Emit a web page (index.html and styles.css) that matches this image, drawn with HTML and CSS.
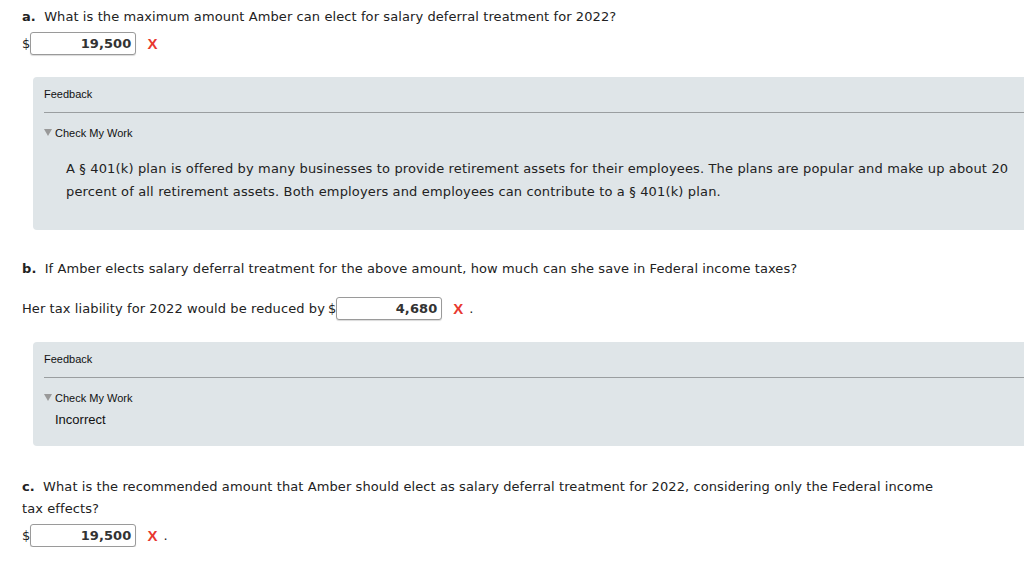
FILE: index.html
```html
<!DOCTYPE html>
<html>
<head>
<meta charset="utf-8">
<link rel="stylesheet" href="styles.css">
</head>
<body>
<div class="page">
  <p class="q"><b class="lbl">a.</b> What is the maximum amount Amber can elect for salary deferral treatment for 2022?</p>
  <div class="row row-a"><span class="cur">$</span><span class="inp">19,500</span><span class="x">X</span></div>
  <div class="fb">
    <div class="fb-title">Feedback</div>
    <div class="fb-rule"></div>
    <div class="cmw"><span class="tri"></span>Check My Work</div>
    <p class="fb-text">A § 401(k) plan is offered by many businesses to provide retirement assets for their employees. The plans are popular and make up about 20<br>percent of all retirement assets. Both employers and employees can contribute to a § 401(k) plan.</p>
  </div>

  <p class="q q-b"><b class="lbl">b.</b> If Amber elects salary deferral treatment for the above amount, how much can she save in Federal income taxes?</p>
  <div class="row row-b"><span class="lead">Her tax liability for 2022 would be reduced by</span><span class="cur">$</span><span class="inp">4,680</span><span class="x">X</span><span class="dot">.</span></div>
  <div class="fb fb-2">
    <div class="fb-title">Feedback</div>
    <div class="fb-rule"></div>
    <div class="cmw"><span class="tri"></span>Check My Work</div>
    <div class="incorrect">Incorrect</div>
  </div>

  <p class="q q-c"><b class="lbl">c.</b> What is the recommended amount that Amber should elect as salary deferral treatment for 2022, considering only the Federal income<br>tax effects?</p>
  <div class="row row-c"><span class="cur">$</span><span class="inp">19,500</span><span class="x">X</span><span class="dot">.</span></div>
</div>
</body>
</html>
```
FILE: styles.css
```css
html, body {
  margin: 0;
  padding: 0;
  overflow: hidden;
  background: #fff;
}
.page {
  padding: 6px 0 0 22px;
  font-family: Verdana, "DejaVu Sans", sans-serif;
  font-size: 13px;
  letter-spacing: 0.09px;
  color: #222;
}
.q {
  margin: 0;
  line-height: 22px;
  white-space: nowrap;
}
.lbl {
  font-weight: bold;
  margin-right: 4px;
}
.row {
  margin-top: 5px;
  height: 23px;
  display: flex;
  align-items: center;
  white-space: nowrap;
}
.row-a {
  margin-top: 4px;
}
.row-c {
  margin-top: 4px;
}
.lead {
  margin-right: 3px;
}
.inp {
  box-sizing: border-box;
  width: 106px;
  height: 23px;
  border: 1px solid #9a9a9a;
  border-radius: 3px;
  box-shadow: 0 1px 1px rgba(0,0,0,0.15);
  text-align: right;
  padding-right: 4px;
  font-weight: bold;
  color: #333;
  line-height: 21px;
  background: #fff;
}
.x {
  font-family: "Liberation Sans", Arial, sans-serif;
  font-weight: bold;
  font-size: 15px;
  letter-spacing: 0;
  color: #e8382f;
  margin-left: 11px;
}
.dot {
  margin-left: 6px;
}
.fb {
  margin-top: 22px;
  margin-left: 11px;
  width: 1000px;
  background: #dfe5e8;
  border-radius: 4px 0 0 4px;
  padding: 10px 0 27px 11px;
  font-family: "Liberation Sans", Arial, sans-serif;
  letter-spacing: 0;
  color: #111;
}
.fb-title {
  font-size: 11px;
  line-height: 14px;
}
.fb-rule {
  margin-top: 11px;
  height: 1px;
  background: #9a9ea0;
}
.cmw {
  margin-top: 13px;
  font-size: 11px;
  line-height: 14px;
  display: flex;
  align-items: center;
}
.tri {
  width: 0;
  height: 0;
  border-left: 4px solid transparent;
  border-right: 4px solid transparent;
  border-top: 7px solid #999;
  margin-right: 3px;
  margin-top: -2px;
}
.fb-text {
  margin: 17px 0 0 22px;
  font-family: Verdana, "DejaVu Sans", sans-serif;
  font-size: 13px;
  letter-spacing: 0.15px;
  line-height: 23px;
  color: #222;
  white-space: nowrap;
}
.q-b {
  margin-top: 28px;
}
.row-b {
  margin-top: 17px;
}
.fb-2 {
  padding-bottom: 18px;
}
.incorrect {
  margin: 7px 0 0 11px;
  font-size: 13px;
  line-height: 16px;
}
.q-c {
  margin-top: 30px;
}
```
